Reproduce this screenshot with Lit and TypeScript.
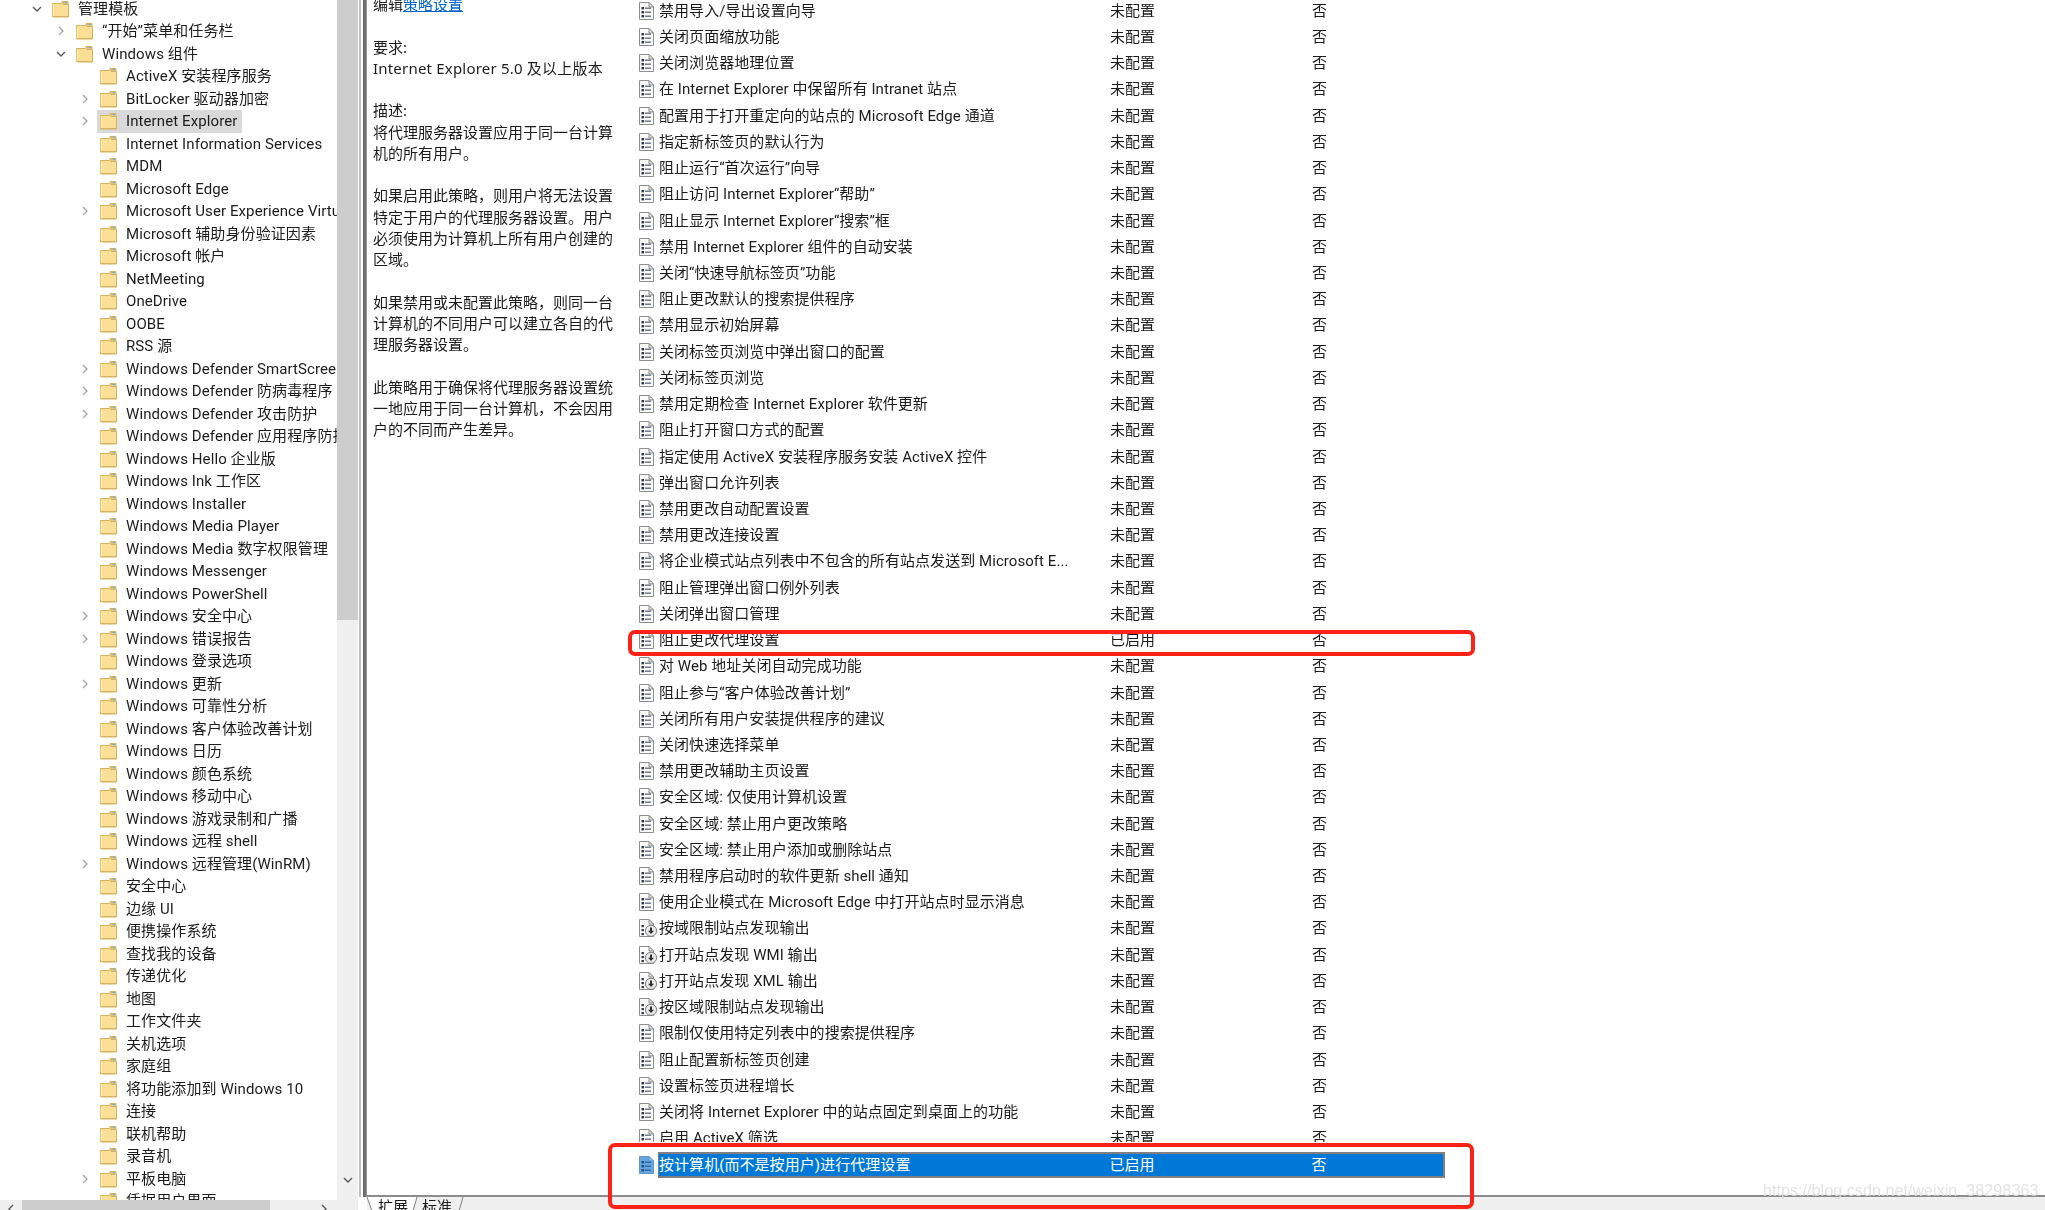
import { LitElement, html, css, svg } from "lit";
import { customElement } from "lit/decorators.js";

type T = [string, number, string?];
const tree: T[] = [
  ["管理模板", 0, "d"], ["“开始”菜单和任务栏", 1, "r"], ["Windows 组件", 1, "d"],
  ["ActiveX 安装程序服务", 2], ["BitLocker 驱动器加密", 2, "r"], ["Internet Explorer", 2, "r"],
  ["Internet Information Services", 2], ["MDM", 2], ["Microsoft Edge", 2],
  ["Microsoft User Experience Virtualization", 2, "r"], ["Microsoft 辅助身份验证因素", 2], ["Microsoft 帐户", 2],
  ["NetMeeting", 2], ["OneDrive", 2], ["OOBE", 2], ["RSS 源", 2],
  ["Windows Defender SmartScreen", 2, "r"], ["Windows Defender 防病毒程序", 2, "r"], ["Windows Defender 攻击防护", 2, "r"],
  ["Windows Defender 应用程序防护", 2], ["Windows Hello 企业版", 2], ["Windows Ink 工作区", 2],
  ["Windows Installer", 2], ["Windows Media Player", 2], ["Windows Media 数字权限管理", 2],
  ["Windows Messenger", 2], ["Windows PowerShell", 2], ["Windows 安全中心", 2, "r"],
  ["Windows 错误报告", 2, "r"], ["Windows 登录选项", 2], ["Windows 更新", 2, "r"],
  ["Windows 可靠性分析", 2], ["Windows 客户体验改善计划", 2], ["Windows 日历", 2],
  ["Windows 颜色系统", 2], ["Windows 移动中心", 2], ["Windows 游戏录制和广播", 2],
  ["Windows 远程 shell", 2], ["Windows 远程管理(WinRM)", 2, "r"], ["安全中心", 2],
  ["边缘 UI", 2], ["便携操作系统", 2], ["查找我的设备", 2], ["传递优化", 2], ["地图", 2],
  ["工作文件夹", 2], ["关机选项", 2], ["家庭组", 2], ["将功能添加到 Windows 10", 2],
  ["连接", 2], ["联机帮助", 2], ["录音机", 2], ["平板电脑", 2, "r"], ["凭据用户界面", 2],
];

const policies: string[] = [
  "禁用导入/导出设置向导", "关闭页面缩放功能", "关闭浏览器地理位置", "在 Internet Explorer 中保留所有 Intranet 站点",
  "配置用于打开重定向的站点的 Microsoft Edge 通道", "指定新标签页的默认行为", "阻止运行“首次运行”向导",
  "阻止访问 Internet Explorer“帮助”", "阻止显示 Internet Explorer“搜索”框", "禁用 Internet Explorer 组件的自动安装",
  "关闭“快速导航标签页”功能", "阻止更改默认的搜索提供程序", "禁用显示初始屏幕", "关闭标签页浏览中弹出窗口的配置",
  "关闭标签页浏览", "禁用定期检查 Internet Explorer 软件更新", "阻止打开窗口方式的配置",
  "指定使用 ActiveX 安装程序服务安装 ActiveX 控件", "弹出窗口允许列表", "禁用更改自动配置设置", "禁用更改连接设置",
  "将企业模式站点列表中不包含的所有站点发送到 Microsoft E...", "阻止管理弹出窗口例外列表", "关闭弹出窗口管理",
  "阻止更改代理设置", "对 Web 地址关闭自动完成功能", "阻止参与“客户体验改善计划”", "关闭所有用户安装提供程序的建议",
  "关闭快速选择菜单", "禁用更改辅助主页设置", "安全区域: 仅使用计算机设置", "安全区域: 禁止用户更改策略",
  "安全区域: 禁止用户添加或删除站点", "禁用程序启动时的软件更新 shell 通知", "使用企业模式在 Microsoft Edge 中打开站点时显示消息",
  "按域限制站点发现输出", "打开站点发现 WMI 输出", "打开站点发现 XML 输出", "按区域限制站点发现输出",
  "限制仅使用特定列表中的搜索提供程序", "阻止配置新标签页创建", "设置标签页进程增长",
  "关闭将 Internet Explorer 中的站点固定到桌面上的功能", "启用 ActiveX 筛选", "按计算机(而不是按用户)进行代理设置",
];
const enabled = new Set([24, 44]);
const download = new Set([35, 36, 37, 38]);

const desc: string[][] = [
  ["要求:", "Internet Explorer 5.0 及以上版本"],
  ["描述:", "将代理服务器设置应用于同一台计算", "机的所有用户。"],
  ["如果启用此策略，则用户将无法设置", "特定于用户的代理服务器设置。用户", "必须使用为计算机上所有用户创建的", "区域。"],
  ["如果禁用或未配置此策略，则同一台", "计算机的不同用户可以建立各自的代", "理服务器设置。"],
  ["此策略用于确保将代理服务器设置统", "一地应用于同一台计算机，不会因用", "户的不同而产生差异。"],
];

const folder = html`<svg class="folder" width="17" height="18" viewBox="0 0 17 18">
  <path d="M10 1.5h6v3h-6z" fill="#f2cd74" stroke="#d5b25f" />
  <rect x="12.5" y="2" width="2.5" height="1.3" fill="#5fb0e8" />
  <path d="M.5 3.5h9l1.6-1.2v2.2h5.4v12.5H.5z" fill="#fadf94" stroke="#d5b25f" />
  <path d="M1 16.5h15.5v.5H1z" fill="#c29d4e" />
  <path d="M1.2 4.4v11.8" stroke="#fff0c0" />
</svg>`;

const bullets = svg`
  <rect class="dot" x="3.5" y="5" width="2.6" height="2.4" /><rect class="bar" x="7" y="5.5" width="6" height="1.4" />
  <rect class="dot" x="3.5" y="9" width="2.6" height="2.4" /><rect class="bar" x="7" y="9.5" width="6" height="1.4" />
  <rect class="dot" x="3.5" y="13" width="2.6" height="2.4" /><rect class="bar" x="7" y="13.5" width="6" height="1.4" />`;

const docIcon = html`<svg class="doc" width="17" height="18" viewBox="0 0 17 18">
  <path class="pg" d="M1.5.5H11l4.5 4.5v12.5H1.5z" />
  <path class="fold" d="M11 .5V5h4.5z" />
  ${bullets}
</svg>`;

const dlIcon = html`<svg class="doc" width="20" height="18" viewBox="0 0 20 18">
  <path class="pg" d="M1.5.5H11l4.5 4.5v12.5H1.5z" />
  <path class="fold" d="M11 .5V5h4.5z" />
  <rect class="dot" x="3.5" y="6" width="2.4" height="2.2" /><rect class="dot" x="3.5" y="10" width="2.4" height="2.2" /><rect class="dot" x="3.5" y="14" width="2.4" height="2.2" />
  <circle cx="13" cy="11.8" r="5.6" fill="#e9e9e9" stroke="#7c7c7c" />
  <path d="M12 8.4h2v3.4h2l-3 3.3-3-3.3h2z" fill="#2f2f2f" />
</svg>`;

const chevR = html`<svg width="8" height="10" viewBox="0 0 8 10"><path d="M2 1l4 4-4 4" fill="none" stroke="#a8a8a8" stroke-width="1.4" /></svg>`;
const chevD = html`<svg width="10" height="8" viewBox="0 0 10 8"><path d="M1 2l4 4 4-4" fill="none" stroke="#5a5a5a" stroke-width="1.4" /></svg>`;

@customElement("app-root")
export class AppRoot extends LitElement {
  static styles = css`
    :host {
      display: block;
      width: 2045px;
      height: 1210px;
      overflow: hidden;
      position: relative;
      background: #fff;
      color: #1c1c1c;
      font: 15px/1.2 Roboto, "Noto Sans CJK SC", sans-serif;
    }
    .main { display: flex; height: 1210px; filter: blur(0.35px); }
    .left { width: 358px; height: 1210px; display: flex; flex-direction: column; flex: none; }
    .tree-wrap { display: flex; height: 1200px; }
    .tree { width: 337px; height: 1200px; overflow: hidden; margin: 0; flex: none; letter-spacing: 0.1px; }
    .tree-in { margin-top: -2.4px; }
    .t-row { height: 22.5px; display: flex; align-items: center; white-space: nowrap; }
    .d0 { padding-left: 31px; }
    .d1 { padding-left: 55px; }
    .d2 { padding-left: 79px; }
    .twist { width: 12px; flex: none; display: flex; align-items: center; justify-content: center; }
    .item { height: 22.5px; margin-left: 6px; padding: 0 5px 0 3px; display: flex; align-items: center; gap: 9px; }
    .item.cur { background: #d9d9d9; }
    .folder { flex: none; }
    .vbar { width: 21px; height: 1200px; background: #f0f0f0; display: flex; flex-direction: column; }
    .vthumb { height: 620px; background: #cdcdcd; }
    .vspace { flex: 1; }
    .vdown { height: 24px; display: flex; justify-content: center; align-items: flex-start; }
    .hbar { height: 10px; background: #f0f0f0; display: flex; align-items: center; overflow: hidden; }
    .hleft { width: 22px; flex: none; display: flex; justify-content: center; padding-top: 8px; }
    .hthumb { width: 248px; height: 10px; background: #cdcdcd; flex: none; }
    .hright { margin-left: 50px; padding-top: 8px; width: 10px; flex: none; }
    .split { width: 9px; flex: none; display: flex; height: 1197px; }
    .split i { display: block; }
    .s1 { width: 1px; background: #fff; }
    .s2 { width: 2px; background: #bcc0c4; }
    .s3 { width: 2px; background: #fff; }
    .s4 { width: 4px; background: linear-gradient(90deg, #6e6e6e, #6e6e6e 60%, #a8a8a8); }
    .right { flex: 1; min-width: 0; display: flex; flex-direction: column; height: 1210px; }
    .body { height: 1195px; display: flex; overflow: hidden; flex: none; }
    .rule { height: 2px; background: #8c8c8c; flex: none; }
    .desc {
      width: 271px; flex: none; padding-left: 6px; box-sizing: border-box;
      font-family: "Noto Sans", "Noto Sans CJK SC", sans-serif;
      line-height: 21.25px; margin-top: -5.8px;
    }
    .desc p { margin: 0 0 21.25px; white-space: nowrap; }
    .desc .wide { letter-spacing: 0.2px; }
    .desc a { color: #0066cc; text-decoration: underline; }
    .list { flex: 1; margin-top: -2.3px; letter-spacing: 0.06px; }
    .row { height: 26.23px; display: flex; align-items: center; position: relative; white-space: nowrap; }
    .ic { width: 20px; flex: none; display: flex; align-items: center; }
    .band { display: flex; align-items: center; width: 787px; height: 26px; box-sizing: border-box; flex: none; }
    .name { width: 452px; flex: none; padding-left: 1px; box-sizing: border-box; }
    .stat { width: 202px; flex: none; }
    .row.sel { margin-top: 0.5px; }
    .row.sel::before {
      content: "";
      position: absolute;
      left: -10px; right: 0; top: -10px; height: 10px;
      background: #fff;
    }
    .row.sel .band { background: #0078d7; color: #fff; border: 2.5px solid #808080; border-left-width: 1.5px; }
    .row.sel .name { padding-left: 0; width: 450.5px; }
    .pg { fill: #fbfbfb; stroke: #8e8e8e; }
    .fold { fill: #e4e4e4; stroke: #8e8e8e; }
    .dot { fill: #2e3944; }
    .bar { fill: #66727f; }
    .sel .pg { fill: #67a5e0; stroke: #5a97d2; }
    .sel .fold { fill: #9cc6ec; stroke: #5a97d2; }
    .sel .dot { fill: #1d4f80; }
    .sel .bar { fill: #2f689e; }
    .foot { flex: 1; background: #f0f0f0; position: relative; overflow: hidden; display: flex; padding-left: 11px; gap: 14px; line-height: 20px; }
    .foot span { position: relative; }
    .tabs { position: absolute; left: 0; top: 0; }
    .red { position: absolute; border: 4.5px solid #fb2318; box-sizing: border-box; border-radius: 7px; pointer-events: none; }
    .r1 { left: 628px; top: 630px; width: 847px; height: 26px; }
    .r2 { left: 608px; top: 1143px; width: 866px; height: 66px; }
    .wm { position: absolute; left: 1763px; top: 1180px; font: 16.2px/20px "Liberation Sans", sans-serif; color: rgba(222, 222, 222, 0.85); white-space: nowrap; }
  `;

  render() {
    return html`
      <div class="main">
        <div class="left">
          <div class="tree-wrap">
            <div class="tree"><div class="tree-in">
              ${tree.map(([n, d, k]) => html`
                <div class="t-row d${d}">
                  <span class="twist">${k === "d" ? chevD : k === "r" ? chevR : ""}</span>
                  <span class="item ${n === "Internet Explorer" ? "cur" : ""}">${folder}<span>${n}</span></span>
                </div>`)}
            </div></div>
            <div class="vbar">
              <div class="vthumb"></div>
              <div class="vspace"></div>
              <div class="vdown">${chevD}</div>
            </div>
          </div>
          <div class="hbar">
            <div class="hleft"><svg width="8" height="10" viewBox="0 0 8 10"><path d="M6 1L2 5l4 4" fill="none" stroke="#5a5a5a" stroke-width="1.4" /></svg></div>
            <div class="hthumb"></div>
            <div class="hright"><svg width="8" height="10" viewBox="0 0 8 10"><path d="M2 1l4 4-4 4" fill="none" stroke="#5a5a5a" stroke-width="1.4" /></svg></div>
          </div>
        </div>
        <div class="split"><i class="s1"></i><i class="s2"></i><i class="s3"></i><i class="s4"></i></div>
        <div class="right">
          <div class="body">
            <div class="desc">
              <p>编辑<a>策略设置</a></p>
              ${desc.map((b) => html`<p>${b.map((l) => html`<span class="${l.startsWith("Internet") ? "wide" : ""}">${l}</span><br />`)}</p>`)}
            </div>
            <div class="list">
              ${policies.map((p, i) => html`
                <div class="row ${i === 44 ? "sel" : ""}">
                  <span class="ic">${download.has(i) ? dlIcon : docIcon}</span>
                  <div class="band">
                    <span class="name">${p}</span>
                    <span class="stat">${enabled.has(i) ? "已启用" : "未配置"}</span>
                    <span>否</span>
                  </div>
                </div>`)}
            </div>
          </div>
          <div class="rule"></div>
          <div class="foot">
            <svg class="tabs" width="110" height="14" viewBox="0 0 110 14">
              <path d="M0 0l5 14h41l4-14z" fill="#fff" />
              <path d="M0 0l5 14M46 14l4-14M92 14l4-14" stroke="#808080" fill="none" />
            </svg>
            <span>扩展</span><span>标准</span>
          </div>
        </div>
      </div>
      <div class="red r1"></div>
      <div class="red r2"></div>
      <div class="wm">https://blog.csdn.net/weixin_38298363</div>
    `;
  }
}
